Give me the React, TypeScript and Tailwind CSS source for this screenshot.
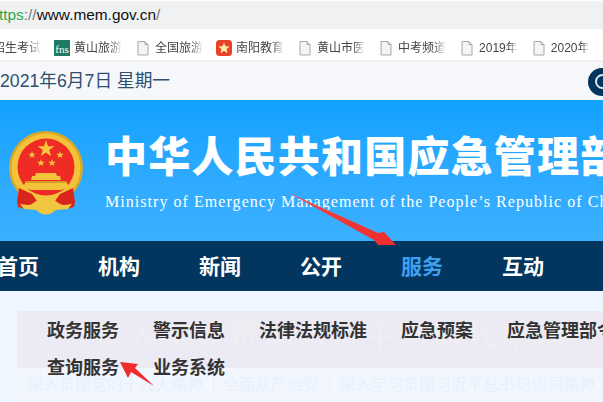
const cjk = "font-['Liberation_Sans','Noto_Sans_CJK_SC',sans-serif]";

const bookmarks = [
  { label: "招生考试", icon: "file" },
  { label: "黄山旅游", icon: "fns" },
  { label: "全国旅游", icon: "file" },
  { label: "南阳教育", icon: "star" },
  { label: "黄山市医", icon: "file" },
  { label: "中考频道", icon: "file" },
  { label: "2019年", icon: "file" },
  { label: "2020年", icon: "file" },
];

const navItems = ["首页", "机构", "新闻", "公开", "服务", "互动"];
const menuTop = ["政务服务", "警示信息", "法律法规标准", "应急预案", "应急管理部令"];
const menuBottom = ["查询服务", "业务系统"];

function FileIcon() {
  return (
    <svg width="16" height="16" viewBox="0 0 16 16" fill="none">
      <path d="M3 1.500h7l3 3v10.500H3z" fill="#f4f4f4" stroke="#a8a8a8" />
      <path d="M10 1.500v3h3" stroke="#a8a8a8" />
    </svg>
  );
}

function FnsIcon() {
  return (
    <span className="flex h-4 w-4 items-end justify-center bg-[#1f7a62] font-['Liberation_Serif',serif] text-[11px] leading-[14px] text-white">
      fns
    </span>
  );
}

function StarIcon() {
  return (
    <svg width="16" height="16" viewBox="0 0 16 16">
      <rect width="16" height="16" rx="3.500" fill="#e8432a" />
      <path d="M8 2.500l1.600 3.700 4 .3-3 2.600.9 3.900L8 10.900 4.500 13l.9-3.900-3-2.600 4-.3z" fill="#fbe9a8" />
    </svg>
  );
}

function Bookmark({ label, icon }: { label: string; icon: string }) {
  return (
    <div className="flex shrink-0 items-center gap-1">
      {icon === "file" && <FileIcon />}
      {icon === "fns" && <FnsIcon />}
      {icon === "star" && <StarIcon />}
      <span className="whitespace-nowrap text-[12px] text-[#444] [mask-image:linear-gradient(to_right,#000_75%,transparent)]">
        {label}
      </span>
    </div>
  );
}

function Emblem() {
  return (
    <svg width="100" height="100" viewBox="0 0 100 100" className="shrink-0">
      <circle cx="46" cy="43" r="37" fill="#dca925" />
      <circle cx="46" cy="43" r="34.500" fill="#f3c33c" />
      <circle cx="46" cy="42" r="28.500" fill="#ee2b24" />
      <path d="M46 15l2 6.200h6.500l-5.300 3.800 2 6.200-5.200-3.800-5.200 3.800 2-6.200-5.300-3.800H44z" fill="#f6c73c" />
      <path d="M32 26l.9 2.700h2.900l-2.300 1.700.9 2.700-2.400-1.700-2.400 1.700.9-2.700-2.300-1.700h2.900zM60 26l.9 2.700h2.900l-2.300 1.700.9 2.700-2.400-1.700-2.400 1.700.9-2.700-2.300-1.700h2.900zM41 34l.9 2.700h2.900l-2.300 1.700.9 2.700-2.400-1.700-2.400 1.700.9-2.700-2.300-1.700h2.900zM52 34l.9 2.700h2.900l-2.300 1.700.9 2.700-2.400-1.700-2.400 1.700.9-2.700-2.300-1.700h2.900z" fill="#f6c73c" />
      <path d="M36 48h20l1 3h3l1 4H31l1-4h3zM26 56h40l3 6-8 3H31l-8-3z" fill="#f3c33c" />
      <path d="M26 56h40v2H26z" fill="#d99a22" />
      <path d="M19 63l13 6 5 7 3 3-2 3-13 2-7-2-1-5zM73 63l-13 6-5 7-3 3 2 3 13 2 7-2 1-5z" fill="#d9261c" />
      <path d="M28 80c6 0 10-8 18-9 8 1 12 9 18 9l8-1-4 5-12 1-4 3c-4 2-8 2-12 0l-4-3-12-1-4-5z" fill="#f1c53f" />
    </svg>
  );
}

function Leaf() {
  return (
    <svg width="36" height="36" viewBox="0 0 36 36" className="absolute top-[38px] left-[17px]" fill="#f4fbf6">
      <path d="M16 30C8 24 4 16 7 8c6 5 10 13 9 22zM20 24c0-9 3-17 8-22 3 8-1 17-8 22zM14 34c6-6 14-8 22-6-6 6-14 8-22 6z" />
    </svg>
  );
}

function Arrows() {
  return (
    <svg width="603" height="402" viewBox="0 0 603 402" className="pointer-events-none absolute top-0 left-0">
      <defs>
        <linearGradient id="shaft" x1="287" y1="192" x2="396" y2="245" gradientUnits="userSpaceOnUse">
          <stop offset="0" stopColor="#e8606a" />
          <stop offset="0.4" stopColor="#ee3a3a" />
          <stop offset="1" stopColor="#f12c2c" />
        </linearGradient>
      </defs>
      <path d="M287 192L378 233l6-1 12 13h-18l-4-5z" fill="url(#shaft)" />
      <path d="M120 362l18 2-3 4 19 18-23-14-3 6z" fill="#f12c2c" />
    </svg>
  );
}

export default function App() {
  return (
    <div className={`relative h-[402px] w-[603px] overflow-hidden bg-white ${cjk}`}>
      <div className="pt-[1px]">
        <div className="flex h-[28px] items-center overflow-hidden bg-[#f0f1f3] text-[15.400px]">
          <span className="ml-[-1px] text-[#2aa84a]">ttps</span>
          <span className="text-[#777]">://</span>
          <span className="text-[#111]">www.mem.gov.cn</span>
          <span className="text-[#777]">/</span>
        </div>
      </div>
      <div className="mt-[5px] ml-[-27px] flex h-[28px] items-center gap-[13px] border-b-2 border-[#f1f1f3] pt-[2px]">
        {bookmarks.map((b) => (
          <Bookmark key={b.label} label={b.label} icon={b.icon} />
        ))}
      </div>
      <div className="flex h-[38px] items-center justify-between bg-[#f5f7fa] pt-[1px]">
        <span className="text-[17.700px] whitespace-nowrap text-[#2e4f70]">2021年6月7日 星期一</span>
        <span className="mr-[-13px] flex h-[28px] w-[28px] shrink-0 items-center justify-center rounded-full bg-[#03365f]">
          <span className="h-[15px] w-[15px] rounded-full border-2 border-[#dfe8f0]" />
        </span>
      </div>

      <div className="flex h-[141px] items-start bg-gradient-to-b from-[#10a2ff] to-[#3cb0ff] pt-[25px]">
        <Emblem />
        <div className="ml-[5px] flex flex-col whitespace-nowrap text-white">
          <div className="mt-[4px] text-[42px] leading-[58px] font-black tracking-[1.200px]">中华人民共和国应急管理部</div>
          <div className="mt-[5px] font-['Liberation_Serif',serif] text-[16px] leading-[20px] tracking-[1.050px]">
            Ministry of Emergency Management of the People’s Republic of China
          </div>
        </div>
      </div>

      <div className="relative flex h-[50px] items-center bg-[#03365f]">
        <div className="ml-[-3px] flex items-center gap-[59px]">
          {navItems.map((item) => (
            <span
              key={item}
              className={`text-[21px] leading-none font-bold whitespace-nowrap ${item === "服务" ? "text-[#3ea0ee]" : "text-white"}`}
            >
              {item}
            </span>
          ))}
        </div>
        <span className="absolute top-full left-[414px] h-0 w-0 border-x-[8px] border-t-[11px] border-x-transparent border-t-[#03365f]" />
      </div>

      <div className="relative h-[111px] bg-[#eff6ff]">
        <div className="absolute top-[77px] right-0 bottom-0 left-[17px] bg-[#f1f6ff]" />
        <Leaf />
        <div className="relative flex items-center whitespace-nowrap pt-[25px] pl-[93px] text-[30px] leading-[40px] font-bold tracking-[4px] text-[#fdfff5]">
          深入学习贯彻习近平新时代中国特色社会主义思想
        </div>
        <div className="relative mt-[18px] flex whitespace-nowrap pl-[27px] text-[16px] leading-[22px] text-[#e9f0fa]">
          <span>深入贯彻党的十九大精神</span>
          <span className="mx-[9.500px] w-[1px] bg-[#e9f0fa]" />
          <span>全面从严治党</span>
          <span className="mx-[9.500px] w-[1px] bg-[#e9f0fa]" />
          <span>深入学习贯彻习近平总书记训词精神</span>
        </div>
        <div className="absolute top-[20px] right-0 left-[17px] h-[57px] bg-[#e8e4f0]/65" />
        <div className="absolute top-[30px] left-[47px] flex flex-col gap-[17px] text-[18px] leading-[20px] font-bold whitespace-nowrap text-[#333]">
          <div className="flex gap-[34px]">
            {menuTop.map((m) => (
              <span key={m}>{m}</span>
            ))}
          </div>
          <div className="flex gap-[34px]">
            {menuBottom.map((m) => (
              <span key={m}>{m}</span>
            ))}
          </div>
        </div>
      </div>
      <Arrows />
    </div>
  );
}
